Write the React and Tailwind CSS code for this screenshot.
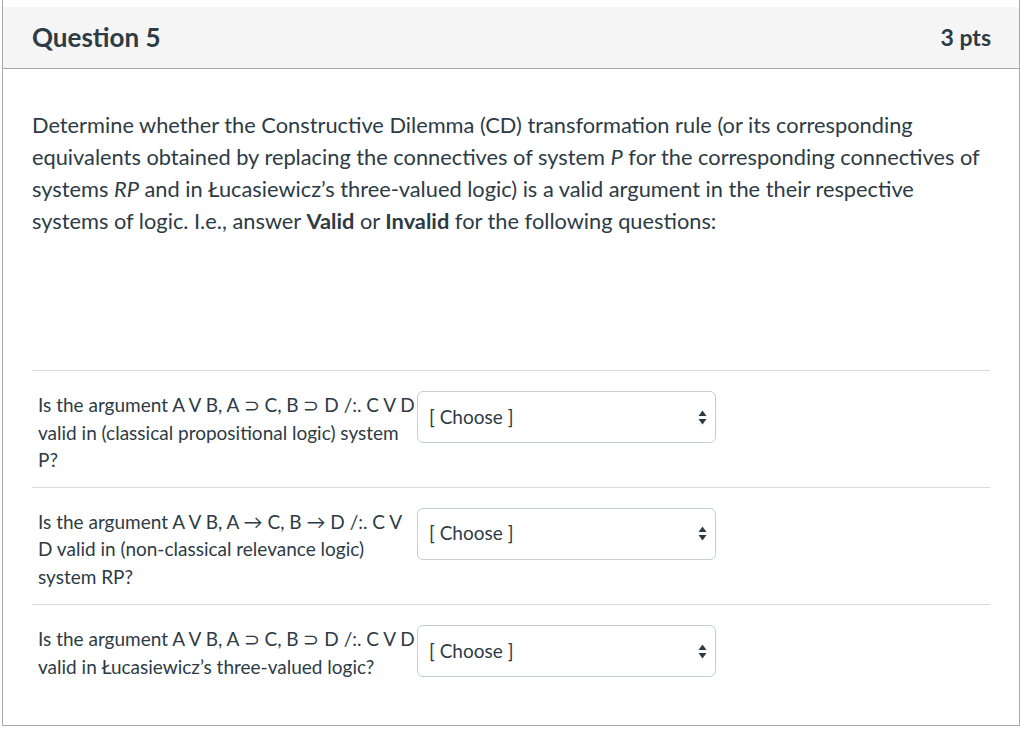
import React from "react";

function Arrows() {
  return (
    <svg width="9" height="15" viewBox="0 0 9 15" className="shrink-0">
      <path d="M4.5 0.5 L8.5 6 L0.5 6 Z" fill="#2d3b45" />
      <path d="M4.5 14.5 L8.5 9 L0.5 9 Z" fill="#2d3b45" />
    </svg>
  );
}

function Select() {
  return (
    <div className="w-[299px] h-[52px] shrink-0 rounded-[6px] border border-[#c7cdd1] bg-white flex items-center justify-between pl-[11px] pr-[8px]">
      <span className="text-[19px] text-[#2d3b45]">[ Choose ]</span>
      <Arrows />
    </div>
  );
}

function Row({ children, pb }) {
  return (
    <div className={"border-t border-[#d7dadd] flex items-start pt-[20px] " + pb}>
      <div className="w-[385px] shrink-0 pl-[6px] text-[19px] leading-[27.5px] text-[#2d3b45]">
        {children}
      </div>
      <Select />
    </div>
  );
}

export default function App() {
  return (
    <div className="w-[1024px] h-[730px] bg-white" style={{ fontFamily: "Lato, 'Noto Sans', sans-serif" }}>
      <div className="ml-[2px] w-[1018px] border-l border-r border-b border-[#a9a9a9] pt-[7px]">
        <div className="bg-[#f5f5f5] border-b border-[#a9a9a9] h-[62px] flex items-center justify-between pl-[29px] pr-[28px]">
          <span className="text-[26px] font-bold text-[#2d3b45]">Question 5</span>
          <span className="text-[23px] font-bold text-[#2d3b45]">3 pts</span>
        </div>
        <div className="px-[29px] pt-[40px]">
          <p className="text-[21.8px] leading-[32px] text-[#2d3b45]">
            Determine whether the Constructive Dilemma (CD) transformation rule (or its corresponding equivalents obtained by replacing the connectives of system <i>P</i> for the corresponding connectives of systems <i>RP</i> and in Łucasiewicz’s three-valued logic) is a valid argument in the their respective systems of logic. I.e., answer <b>Valid</b> or <b>Invalid</b> for the following questions:
          </p>
          <div className="mt-[133px]">
            <Row pb="pb-[13px]">Is the argument A V B, A ⊃ C, B ⊃ D /:. C V D valid in (classical propositional logic) system P?</Row>
            <Row pb="pb-[14px]">Is the argument A V B, A → C, B → D /:. C V D valid in (non-classical relevance logic) system RP?</Row>
            <Row pb="pb-[45px]">Is the argument A V B, A ⊃ C, B ⊃ D /:. C V D valid in Łucasiewicz’s three-valued logic?</Row>
          </div>
        </div>
      </div>
    </div>
  );
}
